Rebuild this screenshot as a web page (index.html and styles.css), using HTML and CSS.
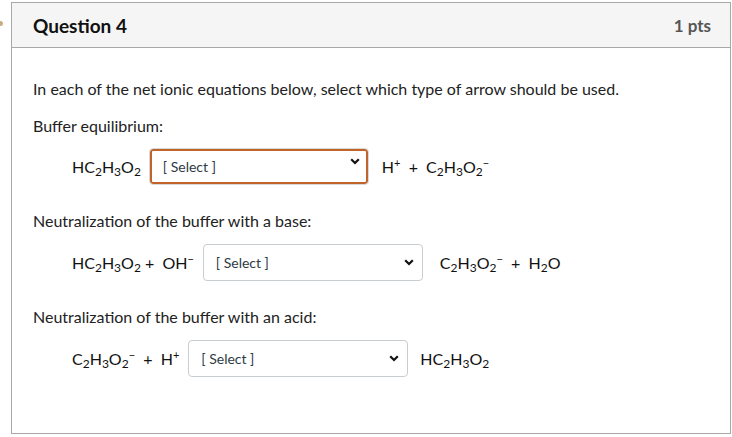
FILE: index.html
```html
<!DOCTYPE html>
<html lang="en">
<head>
<meta charset="utf-8">
<title>Question 4</title>
<link rel="stylesheet" href="styles.css">
</head>
<body>
<span class="nav-dot"></span>
<div class="card">
  <div class="card-header">
    <h2 class="title">Question 4</h2>
    <span class="pts">1 pts</span>
  </div>
  <div class="card-body">
    <p class="text intro">In each of the net ionic equations below, select which type of arrow should be used.</p>
    <p class="text label">Buffer equilibrium:</p>
    <div class="eq eq1">
      <span class="chem">HC<sub>2</sub>H<sub>3</sub>O<sub>2</sub></span>
      <div class="select focused">
        <span class="select-text">[ Select ]</span>
        <svg class="chev chev-up" width="10" height="7" viewBox="0 0 10 7"><path d="M1.2 1.2 L5 5 L8.8 1.2" fill="none" stroke="#111" stroke-width="2.2"/></svg>
      </div>
      <span class="chem">H<sup>+</sup>&nbsp; + &nbsp;C<sub>2</sub>H<sub>3</sub>O<sub>2</sub><sup>&minus;</sup></span>
    </div>
    <p class="text label">Neutralization of the buffer with a base:</p>
    <div class="eq eq2">
      <span class="chem">HC<sub>2</sub>H<sub>3</sub>O<sub>2</sub> + &nbsp;OH<sup>&minus;</sup></span>
      <div class="select">
        <span class="select-text">[ Select ]</span>
        <svg class="chev" width="10" height="7" viewBox="0 0 10 7"><path d="M1.2 1.2 L5 5 L8.8 1.2" fill="none" stroke="#111" stroke-width="2.2"/></svg>
      </div>
      <span class="chem">C<sub>2</sub>H<sub>3</sub>O<sub>2</sub><sup>&minus;</sup>&nbsp; + &nbsp;H<sub>2</sub>O</span>
    </div>
    <p class="text label">Neutralization of the buffer with an acid:</p>
    <div class="eq eq3">
      <span class="chem">C<sub>2</sub>H<sub>3</sub>O<sub>2</sub><sup>&minus;</sup>&nbsp; + &nbsp;H<sup>+</sup></span>
      <div class="select">
        <span class="select-text">[ Select ]</span>
        <svg class="chev" width="10" height="7" viewBox="0 0 10 7"><path d="M1.2 1.2 L5 5 L8.8 1.2" fill="none" stroke="#111" stroke-width="2.2"/></svg>
      </div>
      <span class="chem">HC<sub>2</sub>H<sub>3</sub>O<sub>2</sub></span>
    </div>
  </div>
</div>
</body>
</html>
```
FILE: styles.css
```css
html, body {
  margin: 0;
  padding: 0;
  background: #ffffff;
}
body {
  font-family: Lato, "Open Sans", "Liberation Sans", sans-serif;
  color: #2d3b45;
  position: relative;
}
.nav-dot {
  position: absolute;
  left: -2px;
  top: 21px;
  width: 5px;
  height: 5px;
  border-radius: 50%;
  background: #c9ad85;
}
.card {
  margin: 2px 1px 3px 11px;
  border: 1px solid #a8a8a8;
  box-sizing: border-box;
  height: 432px;
}
.card-header {
  display: flex;
  justify-content: space-between;
  align-items: center;
  height: 44px;
  padding: 0 19px 0 21px;
  background: #f5f5f5;
  border-bottom: 1px solid #a8a8a8;
}
.title {
  margin: 0;
  font-size: 19px;
  font-weight: 700;
  color: #111;
}
.pts {
  font-size: 17px;
  font-weight: 700;
  color: #555;
}
.card-body {
  padding: 29px 20px 0 21px;
}
.text {
  margin: 0;
  font-size: 16px;
  line-height: 24px;
  color: #222;
}
.label {
  margin-top: 13px;
}
.eq {
  display: flex;
  align-items: center;
  margin-left: 39px;
  margin-top: 10px;
  margin-bottom: 24px;
  font-size: 16px;
  color: #111;
}
.eq2, .eq3 {
  margin-top: 11px;
}
.eq + .label { margin-top: 0; }
.chem {
  white-space: nowrap;
  line-height: 24px;
}
.chem sub, .chem sup {
  font-size: 12px;
  line-height: 0;
}
.chem sub { vertical-align: -3px; }
.chem sup { vertical-align: 6px; font-size: 11px; }
.select {
  display: flex;
  align-items: center;
  justify-content: space-between;
  box-sizing: border-box;
  width: 220px;
  height: 37px;
  border: 1px solid #c7cdd1;
  border-radius: 4px;
  padding: 0 8px 0 12px;
  background: #fff;
}
.eq1 .select { margin: 0 13px 0 8px; }
.eq2 .select { margin: 0 17px 0 9px; }
.eq3 .select { margin: 0 12px 0 9px; }
.select.focused {
  border: 1px solid #d8d8d8;
  box-shadow: inset 0 0 0 2px #c0642a;
  padding-left: 13px;
}
.select-text {
  font-size: 14px;
  color: #2d3b45;
}
.chev-up {
  align-self: flex-start;
  margin-top: 9px;
}
```
